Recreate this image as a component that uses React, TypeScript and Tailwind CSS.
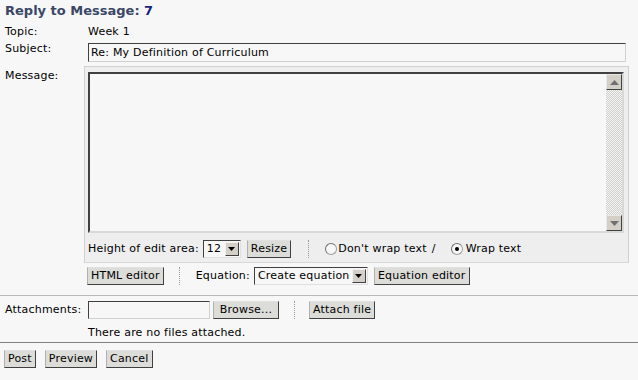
import React from 'react';

const btn =
  'h-[18px] px-[3px] bg-[#dcdcd8] border border-[#404040] border-t-[#e0e0e0] border-l-[#b0b0b0] text-[11px] leading-[14px] tracking-[0.2px] text-black';

function Sep() {
  return <div className="w-0 h-[18px] border-l border-dotted border-[#9a9a9a]" />;
}

function Select({ value, width }: { value: string; width: string }) {
  return (
    <div className={`${width} h-[18px] flex items-center border border-[#404040] border-b-[#e0e0e0] border-r-[#e0e0e0] bg-[#f7f7f7]`}>
      <span className="flex-1 pl-[3px] text-[11px] leading-[14px] whitespace-nowrap overflow-hidden">{value}</span>
      <span className="w-[14px] h-[14px] mr-[1px] shrink-0 flex items-center justify-center bg-[#d4d0c8] border border-[#f0f0f0] border-b-[#404040] border-r-[#404040]">
        <svg width="7" height="4" viewBox="0 0 7 4">
          <path d="M0 0h7L3.5 4z" fill="#000" />
        </svg>
      </span>
    </div>
  );
}

function Radio({ checked }: { checked?: boolean }) {
  return (
    <span className="w-[12px] h-[12px] shrink-0 rounded-full border border-[#a0a0a0] border-l-[#707070] border-t-[#707070] bg-[#f7f7f7] flex items-center justify-center">
      {checked && <span className="w-[4px] h-[4px] rounded-full bg-black" />}
    </span>
  );
}

function ScrollButton({ down }: { down?: boolean }) {
  return (
    <div className="w-[16px] h-[16px] bg-[#d4d0c8] border border-[#e8e8e8] border-b-[#404040] border-r-[#404040] flex items-center justify-center">
      <svg width="9" height="5" viewBox="0 0 9 5">
        {down ? <path d="M0 0h9L4.5 5z" fill="#707070" /> : <path d="M0 5h9L4.5 0z" fill="#707070" />}
      </svg>
    </div>
  );
}

export default function App() {
  return (
    <div
      className="w-[638px] h-[380px] bg-[#f7f7f7] text-black text-[11px] leading-[14px] tracking-[0.2px] overflow-hidden"
      style={{ fontFamily: '"DejaVu Sans", Verdana, sans-serif' }}
    >
      <h1 className="h-[22px] pl-[5px] pt-[2px] text-[13px] leading-[17px] font-bold tracking-normal text-[#3a4766]">
        Reply to Message: <span className="text-[#1a237e]">7</span>
      </h1>

      <div className="grid grid-cols-[83px_1fr] pl-[5px] pr-[9px]">
        <div className="h-[20px] flex items-center">Topic:</div>
        <div className="h-[20px] flex items-center">Week 1</div>

        <div className="h-[24px]">Subject:</div>
        <div className="h-[24px] pt-[1px] pr-[3px]">
          <div className="h-[19px] border border-[#404040] border-b-[#d0d0d0] border-r-[#d0d0d0] bg-[#f7f7f7] pl-[2px] flex items-center whitespace-nowrap">
            Re: My Definition of Curriculum
          </div>
        </div>

        <div className="pt-[3px]">Message:</div>
        <div className="-ml-[4px]">
          <div className="h-[197px] border border-[#d0d0d0] border-b-[#d8d8d8] bg-[#eeeeee] flex flex-col">
            <div className="mt-[5px] ml-[3px] mr-[4px] h-[161px] border-2 border-[#404040] border-b-[#d8d8d8] border-r-[#d8d8d8] bg-[#f7f7f7] flex justify-end">
              <div className="w-[16px] flex flex-col bg-[repeating-conic-gradient(#d0d0cc_0_25%,#f4f4f4_0_50%)] bg-[length:2px_2px]">
                <ScrollButton />
                <div className="flex-1" />
                <ScrollButton down />
              </div>
            </div>
            <div className="flex items-center h-[29px] pt-[3px] pl-[3px] whitespace-nowrap">
              <span>Height of edit area:</span>
              <div className="ml-[4px]"><Select value="12" width="w-[38px]" /></div>
              <button className={`${btn} ml-[6px]`}>Resize</button>
              <div className="ml-[17px] mr-[16px]"><Sep /></div>
              <Radio />
              <span className="ml-[1px]">Don't wrap text</span>
              <span className="ml-[5px] mr-[15px]">/</span>
              <Radio checked />
              <span className="ml-[3px]">Wrap text</span>
            </div>
          </div>
          <div className="flex items-center h-[26px] pl-[3px] whitespace-nowrap">
            <button className={btn}>HTML editor</button>
            <div className="ml-[15px] mr-[16px]"><Sep /></div>
            <span>Equation:</span>
            <div className="ml-[4px]"><Select value="Create equation" width="w-[114px]" /></div>
            <button className={`${btn} ml-[6px]`}>Equation editor</button>
          </div>
        </div>
      </div>

      <div className="mt-[6px] border-t border-[#b8b8b8]" />

      <div className="grid grid-cols-[83px_1fr] pl-[5px] pt-[5px]">
        <div className="h-[18px] flex items-center">Attachments:</div>
        <div className="h-[18px] flex items-center whitespace-nowrap">
          <div className="w-[122px] h-[18px] border border-[#404040] border-b-[#d0d0d0] border-r-[#d0d0d0] bg-[#f7f7f7]" />
          <button className={`${btn} w-[66px] ml-[3px]`}>Browse...</button>
          <div className="ml-[15px] mr-[14px]"><Sep /></div>
          <button className={btn}>Attach file</button>
        </div>
        <div />
        <div className="h-[23px] pt-[7px]">There are no files attached.</div>
      </div>

      <div className="border-t border-[#808080]" />

      <div className="flex gap-[9px] pl-[4px] pt-[7px]">
        <button className={btn}>Post</button>
        <button className={btn}>Preview</button>
        <button className={btn}>Cancel</button>
      </div>
    </div>
  );
}
